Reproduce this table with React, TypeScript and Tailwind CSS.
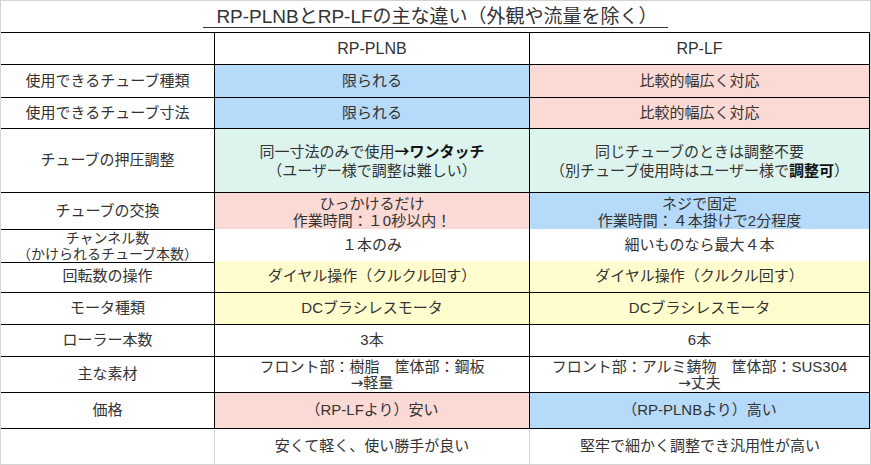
import React from 'react';

type Cell = { text: React.ReactNode; bg?: string; leading?: string };
type Row = { h: string; label: React.ReactNode; a: Cell; b: Cell; labelLeading?: string };

const BLUE = 'bg-[#b6daf9]';
const PINK = 'bg-[#fbd9d4]';
const MINT = 'bg-[#ddf4ee]';
const YELLOW = 'bg-[#fffdcd]';

// 矢印は幅のあるフォントで
const Arrow = () => <span className="font-['Noto_Sans_CJK_JP']">→</span>;
const SmallArrow = () => <span className="font-['DejaVu_Sans']">→</span>;

const rows: Row[] = [
  { h: 'h-[32px]', label: '', a: { text: <span className="text-[16px]">RP-PLNB</span> }, b: { text: <span className="text-[16px]">RP-LF</span> } },
  { h: 'h-[33px]', label: '使用できるチューブ種類', a: { text: '限られる', bg: BLUE }, b: { text: '比較的幅広く対応', bg: PINK } },
  { h: 'h-[31px]', label: '使用できるチューブ寸法', a: { text: '限られる', bg: BLUE }, b: { text: '比較的幅広く対応', bg: PINK } },
  {
    h: 'h-[64px]',
    label: 'チューブの押圧調整',
    a: {
      bg: MINT,
      leading: 'leading-[19px]',
      text: (
        <>
          同一寸法のみで使用<b className="font-bold text-[#111]"><Arrow />ワンタッチ</b>
          <br />（ユーザー様で調整は難しい）
        </>
      ),
    },
    b: {
      bg: MINT,
      leading: 'leading-[19px]',
      text: (
        <>
          同じチューブのときは調整不要
          <br />（別チューブ使用時はユーザー様で<b className="font-bold text-[#111]">調整可</b>）
        </>
      ),
    },
  },
  {
    h: 'h-[36px]',
    label: 'チューブの交換',
    a: { bg: PINK, leading: 'leading-[17px] pt-[2px]', text: <>ひっかけるだけ<br />作業時間：１0秒以内！</> },
    b: { bg: BLUE, leading: 'leading-[17px] pt-[2px]', text: <>ネジで固定<br />作業時間：４本掛けで2分程度</> },
  },
  {
    h: 'h-[32px]',
    label: <>チャンネル数<br />（かけられるチューブ本数）</>,
    labelLeading: 'leading-[16px] text-[14px] pt-[1px]',
    a: { text: '１本のみ' },
    b: { text: '細いものなら最大４本' },
  },
  { h: 'h-[32px]', label: '回転数の操作', a: { text: 'ダイヤル操作（クルクル回す）', bg: YELLOW }, b: { text: 'ダイヤル操作（クルクル回す）', bg: YELLOW } },
  { h: 'h-[32px]', label: 'モータ種類', a: { text: 'DCブラシレスモータ', bg: YELLOW }, b: { text: 'DCブラシレスモータ', bg: YELLOW } },
  { h: 'h-[32px]', label: 'ローラー本数', a: { text: '3本' }, b: { text: '6本' } },
  {
    h: 'h-[36px]',
    label: '主な素材',
    a: { leading: 'leading-[16px]', text: <>フロント部：樹脂　筐体部：鋼板<br /><SmallArrow />軽量</> },
    b: { leading: 'leading-[16px]', text: <>フロント部：アルミ鋳物　筐体部：SUS304<br /><SmallArrow />丈夫</> },
  },
  { h: 'h-[36px]', label: '価格', a: { text: '（RP-LFより）安い', bg: PINK }, b: { text: '（RP-PLNBより）高い', bg: BLUE } },
];

function TableRow({ row }: { row: Row }) {
  return (
    <div className={`grid grid-cols-[214px_315px_340px] ${row.h}`}>
      <div className={`flex items-center justify-center border-b border-r border-black text-center ${row.labelLeading ?? ''}`}>
        <span>{row.label}</span>
      </div>
      <div className={`flex items-center justify-center border-b border-r border-black text-center ${row.a.bg ?? 'bg-white'} ${row.a.leading ?? ''}`}>
        <span>{row.a.text}</span>
      </div>
      <div className={`flex items-center justify-center border-b border-r border-black text-center ${row.b.bg ?? 'bg-white'} ${row.b.leading ?? ''}`}>
        <span>{row.b.text}</span>
      </div>
    </div>
  );
}

export default function App() {
  return (
    <div
      className="w-[871px] h-[465px] overflow-hidden border border-[#d4d4d4] bg-white text-[15px] text-[#333]"
      style={{ fontFamily: '"Liberation Sans", "Noto Sans CJK JP", sans-serif' }}
    >
      <div className="h-[31px] flex items-start justify-center pt-[5px]">
        <span className="border-b border-[#333] pl-[13px] pr-[10px] text-[19px] leading-[21px]">
          RP-PLNBとRP-LFの主な違い（外観や流量を除く）
        </span>
      </div>
      <div className="border-t border-black">
        {rows.map((row, i) => (
          <TableRow key={i} row={row} />
        ))}
        <div className="grid grid-cols-[214px_315px_340px] h-[35px]">
          <div className="border-r border-[#d4d4d4]" />
          <div className="flex items-center justify-center border-r border-[#d4d4d4]">安くて軽く、使い勝手が良い</div>
          <div className="flex items-center justify-center">堅牢で細かく調整でき汎用性が高い</div>
        </div>
      </div>
    </div>
  );
}
